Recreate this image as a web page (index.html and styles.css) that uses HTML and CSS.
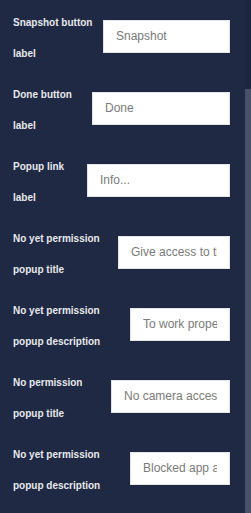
FILE: index.html
```html
<!DOCTYPE html>
<html lang="en">
<head>
    <meta charset="UTF-8">
    <meta name="viewport" content="width=device-width, initial-scale=1.0">
    <title>Labels</title>
    <link rel="stylesheet" href="styles.css">
</head>
<body>
  <div class="frame">
    <div class="settings">
      <div class="row">
        <label class="caption">Snapshot button label</label>
        <input class="field" type="text" placeholder="Snapshot">
      </div>
      <div class="row">
        <label class="caption">Done button label</label>
        <input class="field" type="text" placeholder="Done">
      </div>
      <div class="row">
        <label class="caption">Popup link label</label>
        <input class="field" type="text" placeholder="Info...">
      </div>
      <div class="row">
        <label class="caption">No yet permission popup title</label>
        <input class="field" type="text" placeholder="Give access to the camera">
      </div>
      <div class="row">
        <label class="caption">No yet permission popup description</label>
        <input class="field" type="text" placeholder="To work properly the app needs camera access">
      </div>
      <div class="row">
        <label class="caption">No permission popup title</label>
        <input class="field" type="text" placeholder="No camera access">
      </div>
      <div class="row">
        <label class="caption">No yet permission popup description</label>
        <input class="field" type="text" placeholder="Blocked app access to the camera">
      </div>
    </div>
    <div class="scrollbar">
      <div class="thumb"></div>
    </div>
  </div>
</body>
</html>
```

FILE: styles.css
```css
html, body {
margin: 0;
height: 100%;
}

body {
background: #1f2943;
font-family: "Liberation Sans", Arial, sans-serif;
overflow: hidden;
}

.frame {
display: flex;
height: 100%;
}

.settings {
flex: 1;
min-width: 0;
display: flex;
flex-direction: column;
gap: 10px;
padding: 5px 15px 0 13px;
}

.row {
display: flex;
align-items: center;
height: 62px;
}

.caption {
flex: 1;
min-width: 0;
align-self: flex-start;
margin-top: 2px;
color: #e6e8ec;
font-size: 10px;
font-weight: bold;
line-height: 31px;
}

.field {
flex: none;
box-sizing: border-box;
height: 33px;
border: 1px solid #e2e4e8;
background: #fff;
padding: 0 12px;
font-family: "Liberation Sans", Arial, sans-serif;
font-size: 12px;
color: #777;
outline: none;
}

.field::placeholder {
color: #7a7a7a;
}

.row:nth-child(1) .field { width: 127px; }
.row:nth-child(2) .field { width: 138px; }
.row:nth-child(3) .field { width: 143px; }
.row:nth-child(4) .field { width: 112px; }
.row:nth-child(5) .field { width: 100px; }
.row:nth-child(6) .field { width: 119px; }
.row:nth-child(7) .field { width: 100px; }

.scrollbar {
width: 6px;
padding-top: 89px;
background: #1c2640;
display: flex;
flex-direction: column;
}

.thumb {
flex: 1;
background: #4a5068;
}
```
